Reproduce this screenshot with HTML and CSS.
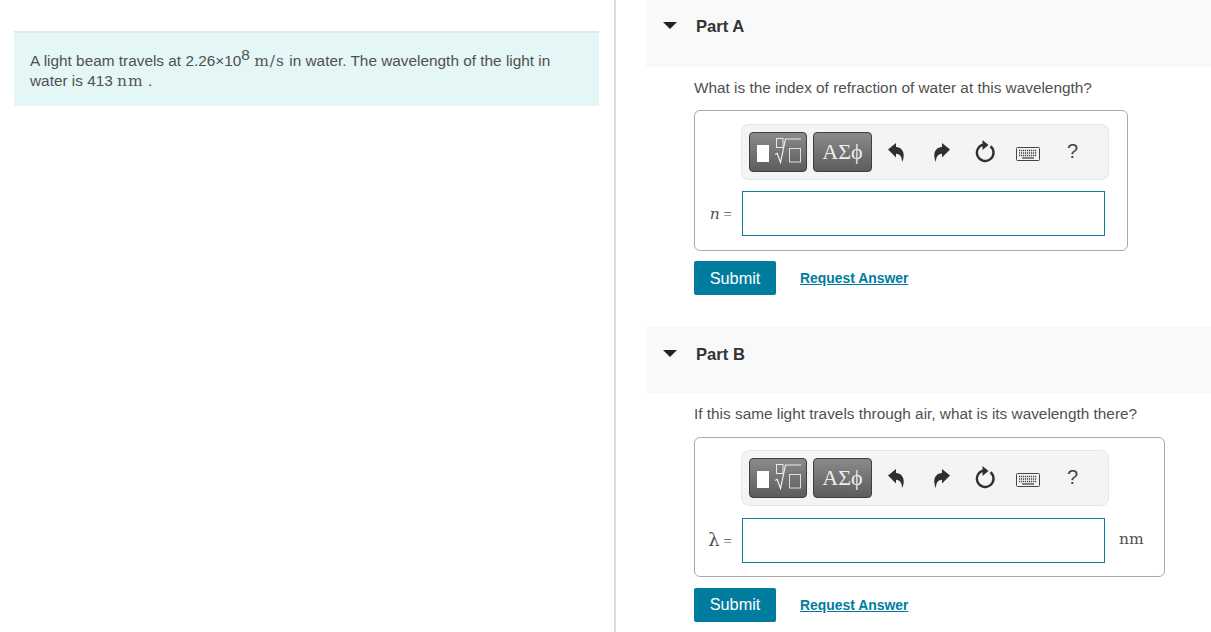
FILE: index.html
```html
<!DOCTYPE html>
<html lang="en">
<head>
    <meta charset="UTF-8">
    <title>Part A and Part B</title>
    <link rel="stylesheet" href="styles.css">
</head>
<body>
    <svg class="icon-defs" width="0" height="0">
        <symbol id="icon-template" viewBox="0 0 46 26">
            <rect x="0" y="7" width="12" height="17" fill="#fff"/>
            <rect x="19.500" y="0.500" width="6.500" height="9" fill="none" stroke="#e8e8e8"/>
            <path d="M18 16.500l2.200-1.200 3.300 9.200 5-23.500h15.500" fill="none" stroke="#eee" stroke-width="1.200"/>
            <rect x="32.500" y="10.500" width="11" height="13.500" fill="none" stroke="#ddd"/>
        </symbol>
        <symbol id="icon-undo" viewBox="0 0 16 19"><path d="M0 6.500 8 0V4C13 4 16 8 15.700 13 15.500 15.500 15 17.500 14 19 14 14.500 12.500 10.800 8 10.800V14.500Z"/></symbol>
        <symbol id="icon-redo" viewBox="0 0 16 19"><path d="M16 6.500 8 0V4C3 4 0 8 .3 13 .5 15.500 1 17.500 2 19 2 14.500 3.500 10.800 8 10.800V14.500Z"/></symbol>
        <symbol id="icon-reset" viewBox="0 0 20 23"><path d="M8 4.700A8.300 8.300 0 1 0 15.500 6.300" fill="none" stroke="currentColor" stroke-width="2.400"/><path d="M7.500 0 13.500 5 7.500 10Z"/></symbol>
        <symbol id="icon-keyboard" viewBox="0 0 24 14">
            <rect x="0.500" y="0.500" width="23" height="13" rx="1" fill="none" stroke="currentColor"/>
            <path d="M3 3.500h18M3 6h18M3 8.500h18" stroke="currentColor" stroke-width="1.300" stroke-dasharray="1.200 .8"/>
            <path d="M6 11h12" stroke="currentColor" stroke-width="1.300"/>
        </symbol>
    </svg>

    <div class="page">
        <div class="left-pane">
            <div class="intro">
                A light beam travels at 2.26&times;10<sup>8</sup> <span class="math-unit">m/s</span> in water. The wavelength of the light in water is 413 <span class="math-unit">nm</span> .
            </div>
        </div>

        <div class="right-pane">
            <!-- Part A -->
            <div class="part-header"><span class="caret"></span><span class="part-title">Part A</span></div>
            <p class="question">What is the index of refraction of water at this wavelength?</p>
            <div class="answer-box box-a">
                <div class="toolbar">
                    <button class="tool-btn btn-template"><svg class="tpl-icon"><use href="#icon-template"/></svg></button>
                    <button class="tool-btn btn-greek">&Alpha;&Sigma;&#981;</button>
                    <svg class="tool-icon undo"><use href="#icon-undo"/></svg>
                    <svg class="tool-icon redo"><use href="#icon-redo"/></svg>
                    <svg class="tool-icon reset"><use href="#icon-reset"/></svg>
                    <svg class="tool-icon keyboard"><use href="#icon-keyboard"/></svg>
                    <span class="tool-help">?</span>
                </div>
                <div class="input-row">
                    <span class="var-label"><i class="math-var">n</i> =</span>
                    <div class="answer-input"></div>
                </div>
            </div>
            <div class="actions">
                <button class="submit">Submit</button>
                <a class="request" href="#">Request Answer</a>
            </div>

            <!-- Part B -->
            <div class="part-header part-b"><span class="caret"></span><span class="part-title">Part B</span></div>
            <p class="question">If this same light travels through air, what is its wavelength there?</p>
            <div class="answer-box box-b">
                <div class="toolbar">
                    <button class="tool-btn btn-template"><svg class="tpl-icon"><use href="#icon-template"/></svg></button>
                    <button class="tool-btn btn-greek">&Alpha;&Sigma;&#981;</button>
                    <svg class="tool-icon undo"><use href="#icon-undo"/></svg>
                    <svg class="tool-icon redo"><use href="#icon-redo"/></svg>
                    <svg class="tool-icon reset"><use href="#icon-reset"/></svg>
                    <svg class="tool-icon keyboard"><use href="#icon-keyboard"/></svg>
                    <span class="tool-help">?</span>
                </div>
                <div class="input-row">
                    <span class="var-label"><i class="math-var lambda">&lambda;</i> =</span>
                    <div class="answer-input"></div>
                    <span class="unit">nm</span>
                </div>
            </div>
            <div class="actions">
                <button class="submit">Submit</button>
                <a class="request" href="#">Request Answer</a>
            </div>
        </div>
    </div>
</body>
</html>
```

FILE: styles.css
```css
html, body {
    margin: 0;
    padding: 0;
    height: 632px;
    overflow: hidden;
    background-color: #fff;
}

body {
    font-family: "Liberation Sans", Arial, sans-serif;
    font-size: 15.36px;
    color: #505050;
}

.icon-defs {
    position: absolute;
}

.page {
    display: flex;
    height: 632px;
}

/* Left column with the problem text */
.left-pane {
    width: 616px;
    flex-shrink: 0;
    box-sizing: border-box;
    padding: 31px 15px 0 14px;
    border-right: 2px solid #d5dfe8;
}

.intro {
    background-color: #e5f6f7;
    border-top: 2px solid #dde9ea;
    box-sizing: border-box;
    height: 75px;
    padding: 18px 45px 0 16px;
    line-height: 20px;
    width: 585px;
}

.intro sup {
    font-size: 15.36px;
    line-height: 0;
    vertical-align: 6px;
}

.math-unit {
    font-family: "DejaVu Serif", serif;
    font-size: 15.500px;
    letter-spacing: 1px;
    line-height: 0;
    color: #555;
}

/* Right column with the parts */
.right-pane {
    flex: 1;
    padding-left: 30px;
    min-width: 0;
}

.part-header {
    display: flex;
    align-items: flex-start;
    height: 67px;
    background-color: #f9f9f9;
    box-sizing: border-box;
    padding: 18px 0 0 17px;
}

.part-b {
    margin-top: 32px;
    height: 66px;
    padding-top: 19px;
}

.caret {
    width: 0;
    height: 0;
    margin-top: 4px;
    border-left: 7px solid transparent;
    border-right: 7px solid transparent;
    border-top: 7px solid #222;
}

.part-title {
    margin-left: 19px;
    font-size: 16.600px;
    line-height: 18px;
    font-weight: bold;
    color: #333;
}

.question {
    margin: 0 0 0 48px;
    padding-top: 12px;
    height: 31px;
    line-height: 18px;
    box-sizing: content-box;
}

.part-b + .question {
    height: 32px;
}

.answer-box {
    margin-left: 48px;
    box-sizing: border-box;
    border: 1px solid #aaa;
    border-radius: 6px;
    padding: 13px 0 0 46px;
}

.box-a {
    width: 434px;
    height: 141px;
}

.box-b {
    width: 471px;
    height: 140px;
    padding-top: 12px;
}

.toolbar {
    display: flex;
    align-items: center;
    width: 368px;
    height: 56px;
    box-sizing: border-box;
    padding-left: 7px;
    background-color: #f4f4f4;
    border: 1px solid #e6e6e6;
    border-radius: 8px;
}

.tool-btn {
    height: 40px;
    margin-bottom: 1px;
    padding: 0;
    border: 1px solid #3f3f3f;
    border-radius: 4px;
    background: linear-gradient(#8a8a8a, #5d5d5d);
    color: #fff;
    flex-shrink: 0;
}

.btn-template {
    width: 58px;
    display: flex;
    align-items: center;
    padding-left: 7px;
}

.tpl-icon {
    width: 46px;
    height: 26px;
    margin-top: -1px;
}

.btn-greek {
    width: 59px;
    margin-left: 6px;
    font-family: "Liberation Serif", "DejaVu Serif", serif;
    font-size: 22px;
    color: #eee;
}

.tool-icon {
    fill: #2f2f2f;
    color: #2f2f2f;
    flex-shrink: 0;
}

.undo {
    width: 16px;
    height: 19px;
    margin-left: 16px;
}

.redo {
    width: 16px;
    height: 19px;
    margin-left: 30px;
}

.reset {
    width: 20px;
    height: 23px;
    margin-left: 25px;
    margin-top: -1px;
}

.keyboard {
    width: 24px;
    height: 14px;
    margin-left: 21px;
    margin-top: 3px;
    color: #444;
}

.tool-help {
    margin-left: 27px;
    margin-top: -2px;
    font-size: 20px;
    color: #444;
}

.input-row {
    display: flex;
    align-items: center;
    margin-left: -46px;
    margin-top: 11px;
}

.box-b .input-row {
    margin-top: 12px;
}

.var-label {
    width: 47px;
    box-sizing: border-box;
    padding-right: 10px;
    text-align: right;
    font-family: "Liberation Serif", serif;
    font-size: 15px;
    white-space: nowrap;
}

.math-var {
    font-family: "DejaVu Serif", serif;
    font-size: 15.500px;
}

.lambda {
    font-style: normal;
    font-size: 18px;
    line-height: 16px;
}

.answer-input {
    width: 363px;
    height: 45px;
    box-sizing: border-box;
    border: 1px solid #0a80a4;
    background-color: #fff;
}

.unit {
    margin-left: 14px;
    margin-top: -3px;
    font-family: "DejaVu Serif", serif;
    font-size: 15.500px;
}

.actions {
    display: flex;
    align-items: center;
    margin: 10px 0 0 48px;
}

.box-b + .actions {
    margin-top: 11px;
}

.box-b + .actions .submit {
    padding-bottom: 2px;
}

.submit {
    width: 82px;
    height: 34px;
    padding: 0;
    border: none;
    border-radius: 2px;
    background-color: #007c9e;
    color: #fff;
    font-family: "Liberation Sans", Arial, sans-serif;
    font-size: 16.300px;
}

.request {
    margin-left: 24px;
    font-size: 13.900px;
    font-weight: bold;
    color: #007c9e;
}
```
